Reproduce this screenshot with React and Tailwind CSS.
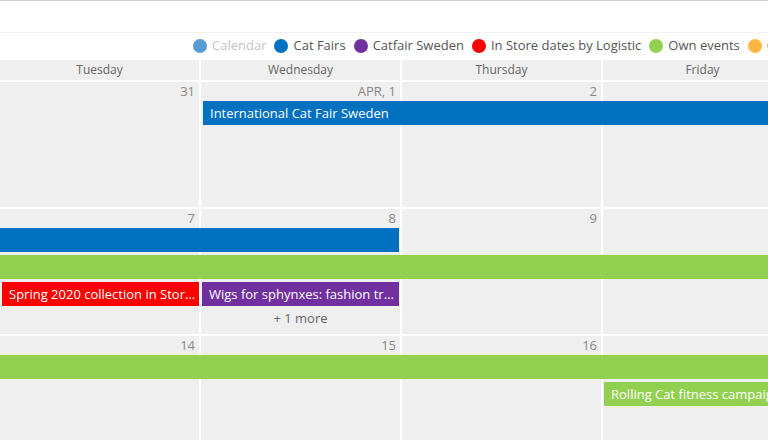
const legend = [
  { label: 'Calendar', color: 'bg-[#5b9bd5]', text: 'text-[#c4c4c4]' },
  { label: 'Cat Fairs', color: 'bg-[#0070c0]', text: 'text-[#555]' },
  { label: 'Catfair Sweden', color: 'bg-[#7030a0]', text: 'text-[#555]' },
  { label: 'In Store dates by Logistic', color: 'bg-[#ff0000]', text: 'text-[#555]' },
  { label: 'Own events', color: 'bg-[#92d050]', text: 'text-[#555]' },
  { label: 'Others', color: 'bg-[#ffb642]', text: 'text-[#555]' },
];

const days = ['Monday', 'Tuesday', 'Wednesday', 'Thursday', 'Friday'];

const weeks = [
  {
    dates: ['30', '31', 'APR, 1', '2', '3'],
    events: [
      { title: 'International Cat Fair Sweden', cls: 'col-start-3 col-end-6 row-start-2 bg-[#0070c0] ml-[2px] pr-[2px]' },
    ],
  },
  {
    dates: ['6', '7', '8', '9', '10'],
    events: [
      { title: '', cls: 'col-start-1 col-end-4 row-start-2 bg-[#0070c0] mr-[1px]' },
      { title: '', cls: 'col-start-1 col-end-6 row-start-3 bg-[#92d050]' },
      { title: 'Spring 2020 collection in Stores', cls: 'col-start-2 col-end-3 row-start-4 bg-[#ff0000] ml-[2px] pr-[2px]' },
      { title: 'Wigs for sphynxes: fashion trends', cls: 'col-start-3 col-end-4 row-start-4 bg-[#7030a0] ml-[1px] mr-[1px] pr-0' },
    ],
    more: { cls: 'col-start-3 col-end-4 row-start-5', label: '+ 1 more' },
  },
  {
    dates: ['13', '14', '15', '16', '17'],
    events: [
      { title: '', cls: 'col-start-1 col-end-6 row-start-2 bg-[#92d050]' },
      { title: 'Rolling Cat fitness campaign', cls: 'col-start-5 col-end-6 row-start-3 bg-[#92d050] ml-[1px] pr-[2px]' },
    ],
  },
];

const Week = ({ week }) => {
  return (
    <div className="grid grid-cols-[repeat(5,199px)] grid-rows-[19px_27px_27px_27px_1fr] gap-x-[2px] h-[125px]">
      {week.dates.map((d, i) => (
        <div
          key={i}
          className={`row-span-full bg-[#efefef] text-right pr-1 text-[13px] leading-[19px] text-[#888] ${
            ['col-start-1', 'col-start-2', 'col-start-3', 'col-start-4', 'col-start-5'][i]
          }`}
        >
          {d}
        </div>
      ))}
      {week.events.map((e, i) => (
        <div
          key={i}
          className={`${e.cls} h-[24px] self-start pl-[7px] text-[13px] leading-[24px] text-white truncate`}
        >
          {e.title}
        </div>
      ))}
      {week.more && (
        <div className={`${week.more.cls} text-center text-[13px] leading-[18px] text-[#666]`}>
          {week.more.label}
        </div>
      )}
    </div>
  );
};

const App = () => {
  return (
    <div className="w-[768px] h-[440px] overflow-hidden bg-white border-t border-[#d0d0d0] font-['Open_Sans',sans-serif]">
      {/* Toolbar area */}
      <div className="h-[32px] border-b border-[#f2f2f2]" />

      {/* Legend */}
      <div className="flex items-center h-[23px] pl-[193px] whitespace-nowrap mt-[1px]">
        {legend.map((l) => (
          <div key={l.label} className="flex items-center mr-[8px] shrink-0">
            <span className={`w-[14px] h-[14px] rounded-full ${l.color}`} />
            <span className={`ml-[5px] text-[13px] ${l.text}`}>{l.label}</span>
          </div>
        ))}
      </div>

      {/* Calendar grid */}
      <div className="ml-[-201px] mt-[3px] flex flex-col gap-y-[2px]">
        <div className="grid grid-cols-[repeat(5,199px)] gap-x-[2px] h-[20px]">
          {days.map((d) => (
            <div key={d} className="bg-[#efefef] text-center text-xs leading-[20px] text-[#666]">
              {d}
            </div>
          ))}
        </div>
        {weeks.map((w, i) => (
          <Week key={i} week={w} />
        ))}
      </div>
    </div>
  );
};

export default App;
